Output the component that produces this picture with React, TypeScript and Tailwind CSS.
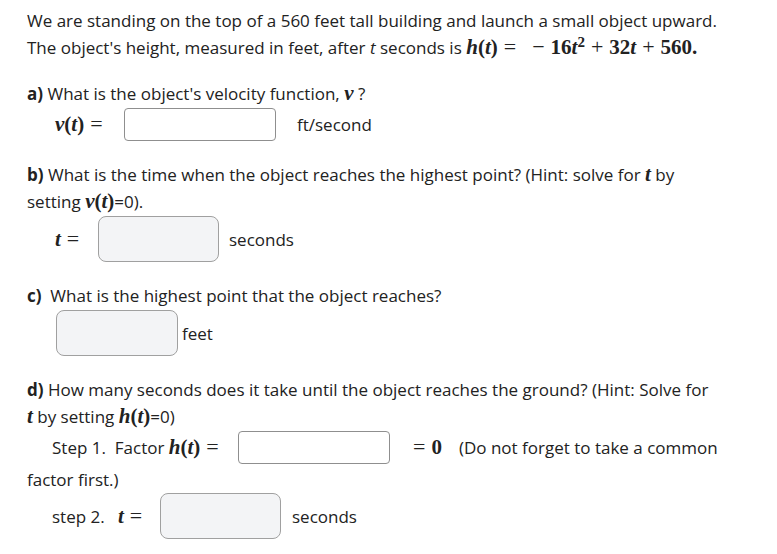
function V({ children }: { children: React.ReactNode }) {
  // math variable, italic serif
  return <i className="font-['Liberation_Serif',serif] italic font-bold text-[21px] leading-[0]">{children}</i>;
}

function N({ children }: { children: React.ReactNode }) {
  // upright math: numbers, parens
  return <span className="font-['Liberation_Serif',serif] font-bold text-[21px] leading-[0]">{children}</span>;
}

function Op({ children }: { children: React.ReactNode }) {
  // thin operator with math spacing
  return (
    <span className="mx-[6px] font-['Liberation_Serif',serif] font-normal text-[22px] leading-[0]">{children}</span>
  );
}

function PlainBox({ w }: { w: string }) {
  return <div className={`${w} h-[33px] shrink-0 rounded-[4px] border border-[#8f8f8f] bg-white`} />;
}

function GrayBox({ w }: { w: string }) {
  return <div className={`${w} h-[46px] shrink-0 rounded-[8px] border border-[#a0a0a0] bg-[#f3f4f6]`} />;
}

export default function App() {
  return (
    <div className="min-h-screen bg-white pl-[27px] pr-2 pt-[7px] text-[17px] leading-[27px] text-[#222] font-['Open_Sans',sans-serif]">
      {/* Intro */}
      <p className="whitespace-nowrap">We are standing on the top of a 560 feet tall building and launch a small object upward.</p>
      <p className="whitespace-nowrap">
        The object's height, measured in feet, after <i>t</i> seconds is <V>h</V>
        <N>(</N>
        <V>t</V>
        <N>)</N>
        <Op>=</Op>
        <span className="ml-[4px]" />
        <Op>−</Op>
        <N>16</N>
        <V>t</V>
        <sup className="font-['Liberation_Serif',serif] font-bold text-[15px] leading-[0]">2</sup>
        <Op>+</Op>
        <N>32</N>
        <V>t</V>
        <Op>+</Op>
        <N>560.</N>
      </p>

      {/* a */}
      <p className="mt-[19px]">
        <b>a)</b> What is the object's velocity function, <V>v</V> ?
      </p>
      <div className="mt-[1px] flex items-center">
        <span className="w-[97px] shrink-0 pl-[28px]">
          <V>v</V>
          <N>(</N>
          <V>t</V>
          <N>)</N>
          <Op>=</Op>
        </span>
        <PlainBox w="w-[152px]" />
        <span className="ml-[21px]">ft/second</span>
      </div>

      {/* b */}
      <p className="mt-[20px] whitespace-nowrap">
        <b>b)</b> What is the time when the object reaches the highest point? (Hint: solve for <V>t</V> by
      </p>
      <p>
        setting <V>v</V>
        <N>(</N>
        <V>t</V>
        <N>)</N>=0).
      </p>
      <div className="mt-[1px] flex items-center">
        <span className="w-[71px] shrink-0 pl-[28px]">
          <V>t</V>
          <Op>=</Op>
        </span>
        <GrayBox w="w-[121px]" />
        <span className="ml-[10px]">seconds</span>
      </div>

      {/* c */}
      <p className="mt-[20px]">
        <b>c)</b> &nbsp;What is the highest point that the object reaches?
      </p>
      <div className="mt-[1px] flex items-center pl-[29px]">
        <GrayBox w="w-[122px]" />
        <span className="ml-[4px]">feet</span>
      </div>

      {/* d */}
      <p className="mt-[20px] whitespace-nowrap">
        <b>d)</b> How many seconds does it take until the object reaches the ground? (Hint: Solve for
      </p>
      <p>
        <V>t</V> by setting <V>h</V>
        <N>(</N>
        <V>t</V>
        <N>)</N>=0)
      </p>
      <div className="mt-[1px] flex items-center whitespace-nowrap">
        <span className="w-[211px] shrink-0 pl-[25px]">
          Step 1.&nbsp; Factor <V>h</V>
          <N>(</N>
          <V>t</V>
          <N>)</N>
          <Op>=</Op>
        </span>
        <PlainBox w="w-[152px]" />
        <span className="ml-[17px]">
          <Op>=</Op>
          <N>0</N>
        </span>
        <span className="ml-[17px]">(Do not forget to take a common</span>
      </div>
      <p className="mt-[2px]">factor first.)</p>
      <div className="mt-0 flex items-center">
        <span className="w-[133px] shrink-0 pl-[25px]">
          step 2.&nbsp;&nbsp; <V>t</V>
          <Op>=</Op>
        </span>
        <GrayBox w="w-[121px]" />
        <span className="ml-[11px]">seconds</span>
      </div>
    </div>
  );
}
